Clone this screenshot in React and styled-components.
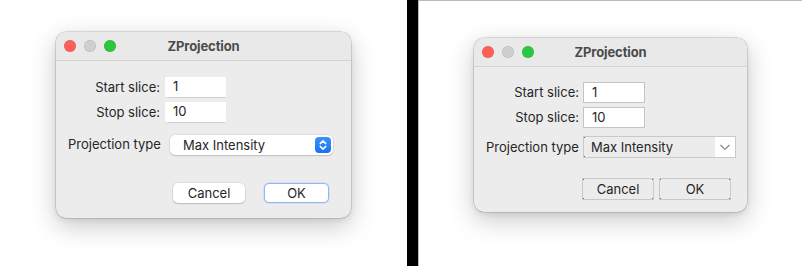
import styled, { createGlobalStyle, css } from "styled-components";

const GlobalStyle = createGlobalStyle`
  html, body {
    margin: 0;
    padding: 0;
    background: #ffffff;
  }
  body {
    font-family: Inter, "Liberation Sans", Arial, sans-serif;
    -webkit-font-smoothing: antialiased;
  }
`;

// sizes for the two look-and-feels
const looks = {
  aqua: {
    width: 295,
    height: 186,
    bodyTop: 16,
    rowH: 20,
    rowGap: 5,
    selectGap: 12,
    buttonGap: 28,
    labelPad: 5,
    selectShift: 5,
    selectW: 163,
    fieldW: 61,
    buttonsRight: 22,
    buttonsGap: 19,
  },
  metal: {
    width: 273,
    height: 174,
    bodyTop: 15,
    rowH: 21,
    rowGap: 4,
    selectGap: 8,
    buttonGap: 20,
    labelPad: 4,
    selectShift: 0,
    selectW: 153,
    fieldW: 62,
    buttonsRight: 16,
    buttonsGap: 5,
  },
};

const cornerDots = css`
  background-image: linear-gradient(#6a6a6a, #6a6a6a),
    linear-gradient(#6a6a6a, #6a6a6a), linear-gradient(#6a6a6a, #6a6a6a),
    linear-gradient(#6a6a6a, #6a6a6a);
  background-size: 2px 2px;
  background-repeat: no-repeat;
  background-position: left top, right top, left bottom, right bottom;
`;

const Screen = styled.div`
  display: flex;
  width: 802px;
  height: 266px;
  overflow: hidden;
`;

const LeftPane = styled.div`
  width: 407px;
  padding: 32px 0 0 56px;
  box-sizing: border-box;
`;

const Divider = styled.div`
  width: 11px;
  background: #000;
`;

const RightPane = styled.div`
  flex: 1;
  border-top: 1px solid #b9b9b9;
  border-left: 1px solid #b9b9b9;
  padding: 37px 0 0 55px;
`;

const Window = styled.div`
  width: ${(p) => looks[p.$look].width}px;
  height: ${(p) => looks[p.$look].height}px;
  background: #ececec;
  border-radius: 10px;
  box-shadow: 0 0 0 0.5px rgba(0, 0, 0, 0.22), 0 8px 26px rgba(0, 0, 0, 0.22),
    0 2px 6px rgba(0, 0, 0, 0.08);
  display: flex;
  flex-direction: column;
  overflow: hidden;
`;

const TitleBar = styled.div`
  height: 28px;
  position: relative;
  display: flex;
  align-items: center;
  justify-content: center;
  background: #e9e9e9;
  border-bottom: 1px solid #d3d3d3;
`;

const Lights = styled.div`
  position: absolute;
  left: 8px;
  top: 8px;
  display: flex;
  gap: 8px;
`;

const Light = styled.span`
  width: 12px;
  height: 12px;
  border-radius: 50%;
  background: ${(p) => p.$color};
  box-shadow: inset 0 0 0 0.5px rgba(0, 0, 0, 0.12);
`;

const Title = styled.div`
  font-size: 13px;
  font-weight: 700;
  color: #4b4b4b;
  letter-spacing: -0.1px;
`;

const Body = styled.div`
  padding: ${(p) => looks[p.$look].bodyTop}px 0 0 12px;
  display: grid;
  grid-template-columns: 97px auto;
  justify-content: start;
  align-items: center;
  font-size: 13px;
  color: #262626;
`;

const Label = styled.div`
  height: ${(p) => looks[p.$look].rowH}px;
  line-height: ${(p) => looks[p.$look].rowH}px;
  margin-top: ${(p) => (p.$first ? 0 : looks[p.$look].rowGap)}px;
  text-align: right;
  padding-right: ${(p) => looks[p.$look].labelPad}px;
  white-space: nowrap;
`;

const TypeLabel = styled.div`
  margin-top: ${(p) => looks[p.$look].selectGap}px;
  white-space: nowrap;
  line-height: ${(p) => looks[p.$look].rowH + 1}px;
`;

const Field = styled.div`
  box-sizing: border-box;
  width: ${(p) => looks[p.$look].fieldW}px;
  height: ${(p) => looks[p.$look].rowH}px;
  margin-top: ${(p) => (p.$first ? 0 : looks[p.$look].rowGap)}px;
  line-height: ${(p) => looks[p.$look].rowH - 2}px;
  background: #fff;
  padding-left: 8px;
  ${(p) =>
    p.$look === "aqua"
      ? css`
          box-shadow: 0 0.5px 1px rgba(0, 0, 0, 0.12);
        `
      : css`
          border: 1px solid #c4c4c4;
        `}
`;

const Select = styled.div`
  box-sizing: border-box;
  width: ${(p) => looks[p.$look].selectW}px;
  height: ${(p) => looks[p.$look].rowH + (p.$look === "metal" ? 1 : 0)}px;
  margin-top: ${(p) => looks[p.$look].selectGap}px;
  margin-left: ${(p) => looks[p.$look].selectShift}px;
  display: flex;
  align-items: center;
  justify-content: space-between;
  ${(p) =>
    p.$look === "aqua"
      ? css`
          background: #fff;
          border-radius: 5px;
          padding: 0 2px 0 13px;
          box-shadow: 0 0 0 0.5px rgba(0, 0, 0, 0.1),
            0 1px 1.5px rgba(0, 0, 0, 0.15);
        `
      : css`
          background-color: #ececec;
          ${cornerDots};
          box-shadow: inset 0 0 0 1px #c9c9c9;
          padding: 0 1px 0 8px;
        `}
`;

const Stepper = styled.span`
  width: 16px;
  height: 16px;
  border-radius: 4px;
  background: linear-gradient(#3a92fb, #1a72f0);
  display: flex;
  align-items: center;
  justify-content: center;
`;

const ArrowBox = styled.span`
  width: 20px;
  height: 20px;
  background: #fff;
  display: flex;
  align-items: center;
  justify-content: center;
`;

const Buttons = styled.div`
  display: flex;
  justify-content: flex-end;
  gap: ${(p) => looks[p.$look].buttonsGap}px;
  padding-right: ${(p) => looks[p.$look].buttonsRight}px;
  margin-top: ${(p) => looks[p.$look].buttonGap}px;
`;

const Button = styled.button`
  box-sizing: border-box;
  font-family: inherit;
  font-size: 13px;
  color: #262626;
  padding: 0;
  cursor: pointer;
  width: ${(p) => p.$w}px;
  ${(p) =>
    p.$look === "aqua"
      ? css`
          height: 20px;
          border-radius: 5px;
          background: #fff;
          border: ${p.$default ? "1px solid #8fb9f2" : "none"};
          box-shadow: ${p.$default
            ? "0 0 0 0.5px rgba(80,140,230,0.25)"
            : "0 0 0 0.5px rgba(0,0,0,0.12), 0 1px 1.5px rgba(0,0,0,0.15)"};
        `
      : css`
          height: 22px;
          border: none;
          background-color: #ececec;
          ${cornerDots};
          box-shadow: inset 0 0 0 1px #c9c9c9;
        `}
`;

const UpDown = () => (
  <svg width="10" height="12" viewBox="0 0 10 12" fill="none">
    <path
      d="M2.2 4.6 5 1.9l2.8 2.7M2.2 7.4 5 10.1l2.8-2.7"
      stroke="#fff"
      strokeWidth="1.5"
      strokeLinecap="round"
      strokeLinejoin="round"
    />
  </svg>
);

const Chevron = () => (
  <svg width="12" height="8" viewBox="0 0 12 8" fill="none">
    <path d="M1.5 2 6 6.3 10.5 2" stroke="#7a7a7a" strokeWidth="1.1" />
  </svg>
);

const ProjectionDialog = ({ look }) => {
  const cancelW = 72;
  const okW = look === "aqua" ? 65 : 72;
  return (
    <Window $look={look}>
      <TitleBar>
        <Lights>
          <Light $color="#fe5f57" />
          <Light $color="#cfcfcf" />
          <Light $color="#2ac73f" />
        </Lights>
        <Title>ZProjection</Title>
      </TitleBar>
      <Body $look={look}>
        <Label $look={look} $first>
          Start slice:
        </Label>
        <Field $look={look} $first>
          1
        </Field>
        <Label $look={look}>Stop slice:</Label>
        <Field $look={look}>10</Field>
        <TypeLabel $look={look}>Projection type</TypeLabel>
        <Select $look={look}>
          <span>Max Intensity</span>
          {look === "aqua" ? (
            <Stepper>
              <UpDown />
            </Stepper>
          ) : (
            <ArrowBox>
              <Chevron />
            </ArrowBox>
          )}
        </Select>
      </Body>
      <Buttons $look={look}>
        <Button $look={look} $w={cancelW}>
          Cancel
        </Button>
        <Button $look={look} $w={okW} $default>
          OK
        </Button>
      </Buttons>
    </Window>
  );
};

export default function App() {
  return (
    <>
      <GlobalStyle />
      <Screen>
        <LeftPane>
          <ProjectionDialog look="aqua" />
        </LeftPane>
        <Divider />
        <RightPane>
          <ProjectionDialog look="metal" />
        </RightPane>
      </Screen>
    </>
  );
}
